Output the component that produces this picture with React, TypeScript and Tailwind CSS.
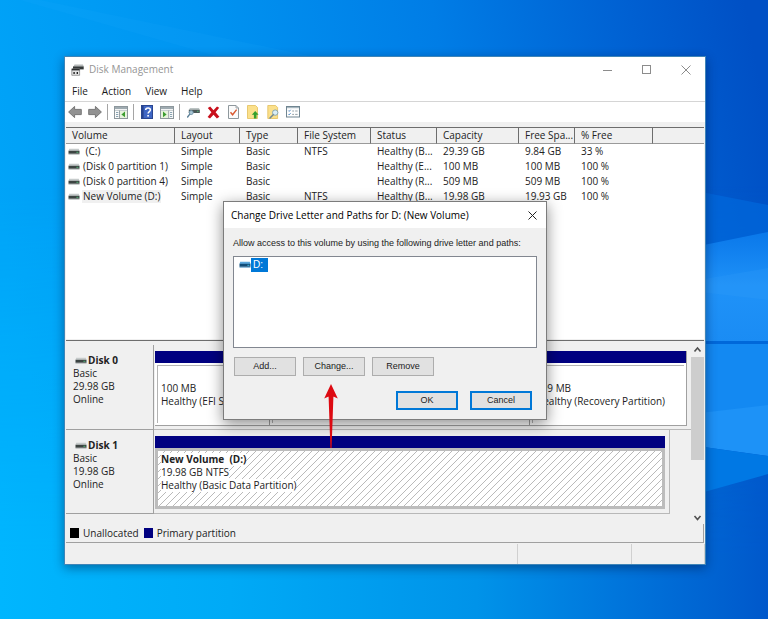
import { useId } from 'react';
import type { ReactNode } from 'react';
import clsx from 'clsx';

interface Volume {
  name: string;
  fs: string;
  status: string;
  capacity: string;
  free: string;
  percent: string;
  selected?: boolean;
}

const columns = [
  { label: 'Volume', width: 'w-[109px]' },
  { label: 'Layout', width: 'w-[65px]' },
  { label: 'Type', width: 'w-[58px]' },
  { label: 'File System', width: 'w-[73px]' },
  { label: 'Status', width: 'w-[66px]' },
  { label: 'Capacity', width: 'w-[82px]' },
  { label: 'Free Spa...', width: 'w-[56px]' },
  { label: '% Free', width: 'w-[78px]' },
  { label: '', width: '' },
];

const volumes: Volume[] = [
  { name: '\u00a0(C:)', fs: 'NTFS', status: 'Healthy (B...', capacity: '29.39 GB', free: '9.84 GB', percent: '33 %' },
  { name: '(Disk 0 partition 1)', fs: '', status: 'Healthy (E...', capacity: '100 MB', free: '100 MB', percent: '100 %' },
  { name: '(Disk 0 partition 4)', fs: '', status: 'Healthy (R...', capacity: '509 MB', free: '509 MB', percent: '100 %' },
  { name: 'New Volume (D:)', fs: 'NTFS', status: 'Healthy (B...', capacity: '19.98 GB', free: '19.93 GB', percent: '100 %', selected: true },
];

function Wallpaper() {
  return (
    <svg className="absolute inset-0 h-full w-full" viewBox="0 0 768 619" preserveAspectRatio="none" aria-hidden="true">
      <defs>
        <linearGradient id="sky" x1="0" y1="0.35" x2="1" y2="0.2">
          <stop offset="0" stopColor="#00a4f8" />
          <stop offset="0.3" stopColor="#0094f1" />
          <stop offset="0.6" stopColor="#007de6" />
          <stop offset="0.85" stopColor="#0060d2" />
          <stop offset="1" stopColor="#0050c5" />
        </linearGradient>
        <linearGradient id="floor" x1="0" y1="0" x2="1" y2="0">
          <stop offset="0" stopColor="#00b6fe" />
          <stop offset="0.3" stopColor="#00aaf6" />
          <stop offset="0.62" stopColor="#0093e9" />
          <stop offset="0.8" stopColor="#0076dc" />
          <stop offset="1" stopColor="#0058cb" />
        </linearGradient>
        <linearGradient id="floorFade" x1="0" y1="0" x2="0" y2="1">
          <stop offset="0.3" stopColor="#000" />
          <stop offset="0.9" stopColor="#fff" />
        </linearGradient>
        <mask id="floorMask">
          <rect width="768" height="619" fill="url(#floorFade)" />
        </mask>
        <linearGradient id="beam" x1="0" y1="0" x2="0" y2="1">
          <stop offset="0" stopColor="#0a78ea" />
          <stop offset="0.5" stopColor="#1f92f8" />
          <stop offset="1" stopColor="#1a8cf4" />
        </linearGradient>
      </defs>
      <rect width="768" height="619" fill="url(#sky)" />
      <rect width="768" height="619" fill="url(#floor)" mask="url(#floorMask)" />
      <path d="M20 0 L230 60 L330 60 L40 0Z" fill="#2bb0ff" opacity="0.1" />
      <path d="M640 180 L768 205 V240 L640 255Z" fill="#0068dc" opacity="0.7" />
      <path d="M640 258 L768 232 V342 H640Z" fill="url(#beam)" />
      <path d="M640 290 L768 268 V300 L640 285Z" fill="#35a0fc" opacity="0.2" />
      <path d="M640 344 H768 V456 L640 438Z" fill="#1d92f7" />
      <path d="M640 344 H768 V405 L640 420Z" fill="#0a80ee" opacity="0.5" />
      <rect x="640" y="341" width="128" height="3" fill="#0068da" />
      <path d="M640 438 L768 456 V474 L640 510Z" fill="#0078e4" />
    </svg>
  );
}

function DriveIcon({ blue = false }: { blue?: boolean }) {
  return (
    <svg width="12" height="8" viewBox="0 0 12 8" className="shrink-0" aria-hidden="true">
      <path d="M1.2 0.8 H10.8 L11.5 3 H0.5Z" fill={blue ? '#5ba7dc' : '#c6cbcb'} />
      <rect x="0.5" y="2.8" width="11" height="3" fill={blue ? '#114c78' : '#3c4442'} />
      <rect x="8.4" y="3.8" width="2" height="1" fill={blue ? '#3cb8e0' : '#4fae72'} />
      <rect x="0.5" y="5.8" width="11" height="0.8" fill={blue ? '#4f93c4' : '#a9afae'} />
    </svg>
  );
}

function AppIcon() {
  return (
    <svg width="13" height="12" viewBox="0 0 13 12" aria-hidden="true">
      <path d="M3.5 0.5 H12 L12.7 2.5 H2.5Z" fill="#b5b9ba" />
      <path d="M2 2.4 H12.7 V5.4 H2Z" fill="#34393a" />
      <path d="M0.8 4.8 H8.6 V11.3 H0.8Z" fill="#e3e3e3" stroke="#7a7a7a" strokeWidth="0.7" />
      <path d="M0.8 4.8 H8.6 V6.4 H0.8Z" fill="#2c2f30" />
      <rect x="2.4" y="8" width="1.4" height="2" fill="#222" />
      <rect x="5.6" y="8" width="1.4" height="2" fill="#222" />
    </svg>
  );
}

function ArrowIcon({ flip = false }: { flip?: boolean }) {
  return (
    <svg width="14" height="14" viewBox="0 0 14 14" className={clsx(flip && 'rotate-180')} aria-hidden="true">
      <path d="M0.6 7 L6.6 1.4 V4.4 H13.3 V9.6 H6.6 V12.6Z" fill="#929292" stroke="#6e6e6e" strokeWidth="0.9" strokeLinejoin="round" />
    </svg>
  );
}

function PaneIcon({ side }: { side: 'left' | 'right' }) {
  return (
    <svg width="14" height="13" viewBox="0 0 14 13" aria-hidden="true">
      <rect x="0.5" y="0.5" width="13" height="12" fill="#fafafa" stroke="#8d979c" />
      <rect x="1" y="1" width="12" height="2" fill="#9fabb1" />
      <path d="M1 4.4 H13" stroke="#b4bcc0" strokeWidth="0.8" />
      {side === 'left' ? (
        <>
          <path d="M5.5 4.5 V12" stroke="#8d979c" strokeWidth="0.9" />
          <path d="M2 6.5 H4.3 M2 8.5 H4.3 M2 10.5 H4.3" stroke="#7b98a8" strokeWidth="0.9" />
          <rect x="6" y="5" width="7" height="7" fill="#e6f3dc" />
          <path d="M11 5.6 V11.2 L7.4 8.4Z" fill="#3c9d2f" />
        </>
      ) : (
        <>
          <path d="M8.7 4.5 V12" stroke="#8d979c" strokeWidth="0.9" />
          <path d="M10 6.5 H12.2 M10 8.5 H12.2 M10 10.5 H12.2" stroke="#7b98a8" strokeWidth="0.9" />
          <rect x="1" y="5" width="7" height="7" fill="#e6f3dc" />
          <path d="M3 5.6 V11.2 L6.6 8.4Z" fill="#3c9d2f" />
        </>
      )}
    </svg>
  );
}

function HelpIcon() {
  return (
    <svg width="12" height="14" viewBox="0 0 12 14" aria-hidden="true">
      <rect x="0.5" y="0.5" width="11" height="13" fill="#3f66c4" stroke="#2a4690" />
      <path d="M1 1 H2.6 V13 H1Z" fill="#27438f" />
      <path d="M4.7 5 C4.7 2.4 9.4 2.4 9.4 5 C9.4 6.6 7.1 6.6 7.1 8.6" fill="none" stroke="#fff" strokeWidth="1.5" />
      <rect x="6.3" y="10" width="1.6" height="1.6" fill="#fff" />
    </svg>
  );
}

function RescanIcon() {
  return (
    <svg width="13" height="11" viewBox="0 0 13 11" aria-hidden="true">
      <path d="M3 1 H12 L12.8 3 H1.8Z" fill="#bcc4c4" />
      <rect x="1.8" y="2.8" width="11" height="3.2" fill="#4c5857" />
      <rect x="10" y="3.8" width="1.6" height="1" fill="#58b27c" />
      <circle cx="4.2" cy="5.6" r="2" fill="#a9c6d4" stroke="#6f93a8" strokeWidth="0.9" />
      <path d="M2.6 7.4 L0.6 10" stroke="#5b7f96" strokeWidth="1.4" strokeLinecap="round" />
    </svg>
  );
}

function DeleteIcon() {
  return (
    <svg width="13" height="13" viewBox="0 0 13 13" aria-hidden="true">
      <path d="M0.8 2 L3.2 0.6 L6.5 4.2 L10 0.6 L12.2 1.8 L8.6 6.3 L12.4 10.8 L9.9 12.5 L6.5 8.7 L3 12.5 L0.6 11 L4.4 6.3Z" fill="#c9101c" />
    </svg>
  );
}

function CheckPageIcon() {
  return (
    <svg width="11" height="14" viewBox="0 0 11 14" aria-hidden="true">
      <path d="M0.5 0.5 H8 L10.5 3 V13.5 H0.5Z" fill="#fbfbfb" stroke="#8f989d" />
      <path d="M8 0.5 V3 H10.5" fill="none" stroke="#8f989d" strokeWidth="0.8" />
      <path d="M2.5 7.2 L4.6 9.8 L8.6 4.6" fill="none" stroke="#d9582f" strokeWidth="1.4" />
    </svg>
  );
}

function FolderUpIcon() {
  return (
    <svg width="12" height="14" viewBox="0 0 12 14" aria-hidden="true">
      <path d="M0.5 0.5 H8.5 L10.5 2.5 V13.5 H0.5Z" fill="#fbe08b" stroke="#e2bf5c" strokeWidth="0.8" />
      <path d="M8.2 6 L11.6 9.8 H9.5 V13.4 H6.9 V9.8 H4.8Z" fill="#35a02c" />
    </svg>
  );
}

function FolderFindIcon() {
  return (
    <svg width="12" height="14" viewBox="0 0 12 14" aria-hidden="true">
      <path d="M0.8 0.5 H8.6 L10.6 2.5 V13.5 H0.8Z" fill="#fbe08b" stroke="#e2bf5c" strokeWidth="0.8" />
      <circle cx="8.2" cy="7.6" r="2.7" fill="#d9edf5" stroke="#7fa0af" strokeWidth="0.9" />
      <path d="M6.2 9.7 L3 13" stroke="#6f8894" strokeWidth="1.5" strokeLinecap="round" />
    </svg>
  );
}

function PropertiesIcon() {
  return (
    <svg width="14" height="12" viewBox="0 0 14 12" aria-hidden="true">
      <rect x="0.5" y="0.5" width="13" height="10.5" fill="#fdfdfd" stroke="#708591" />
      <rect x="1" y="1" width="12" height="1.2" fill="#a9b8c0" />
      <path d="M2.4 4.6 L3.2 5.4 L4.6 3.8 M2.4 8 L3.2 8.8 L4.6 7.2" fill="none" stroke="#3f7fc0" strokeWidth="0.9" />
      <path d="M6.2 5 H8 M9.2 5 H11.6 M6.2 8.4 H8 M9.2 8.4 H11.6" stroke="#8a979e" strokeWidth="0.9" />
    </svg>
  );
}

function ToolButton({ label, children }: { label: string; children: ReactNode }) {
  return (
    <button type="button" aria-label={label} className="flex h-[18px] w-5 items-center justify-center">
      {children}
    </button>
  );
}

function ToolSeparator() {
  return <span className="mr-[3px] ml-[2px] h-4 w-px bg-[#a5a5a5]" />;
}

function TitleBar() {
  return (
    <header className="flex h-[25px] items-center bg-white pl-[6px] text-[#959595]">
      <AppIcon />
      <h1 className="ml-[5px] flex-1 text-[10px]">Disk Management</h1>
      <button type="button" aria-label="Minimize" className="flex h-full w-[39px] items-center justify-center">
        <svg width="10" height="10" viewBox="0 0 10 10" fill="none" stroke="#8c8c8c">
          <path d="M0 5.5 H9" />
        </svg>
      </button>
      <button type="button" aria-label="Maximize" className="flex h-full w-[39px] items-center justify-center">
        <svg width="10" height="10" viewBox="0 0 10 10" fill="none" stroke="#8c8c8c">
          <rect x="0.5" y="0.5" width="8" height="8" />
        </svg>
      </button>
      <button type="button" aria-label="Close" className="flex h-full w-[39px] items-center justify-center">
        <svg width="10" height="10" viewBox="0 0 10 10" fill="none" stroke="#8c8c8c">
          <path d="M0.5 0.5 L9.5 9.5 M9.5 0.5 L0.5 9.5" />
        </svg>
      </button>
    </header>
  );
}

function MenuBar() {
  return (
    <nav className="flex h-5 items-center gap-[14px] border-b border-[#d5d5d5] bg-white pl-[7px] text-[10px] text-[#1a1a1a]">
      {['File', 'Action', 'View', 'Help'].map((item) => (
        <button key={item} type="button">
          {item}
        </button>
      ))}
    </nav>
  );
}

function Toolbar() {
  return (
    <div className="flex h-5 items-center bg-white">
      <ToolButton label="Back"><ArrowIcon /></ToolButton>
      <ToolButton label="Forward"><ArrowIcon flip /></ToolButton>
      <ToolSeparator />
      <ToolButton label="Show console tree"><PaneIcon side="left" /></ToolButton>
      <ToolSeparator />
      <ToolButton label="Help"><HelpIcon /></ToolButton>
      <ToolButton label="Show action pane"><PaneIcon side="right" /></ToolButton>
      <ToolSeparator />
      <ToolButton label="Rescan"><RescanIcon /></ToolButton>
      <ToolButton label="Delete"><DeleteIcon /></ToolButton>
      <ToolButton label="Check"><CheckPageIcon /></ToolButton>
      <ToolButton label="Up"><FolderUpIcon /></ToolButton>
      <ToolButton label="Find"><FolderFindIcon /></ToolButton>
      <ToolButton label="Properties"><PropertiesIcon /></ToolButton>
    </div>
  );
}

function VolumeTable() {
  return (
    <div className="flex-1 overflow-hidden border-t border-[#6d6d6d] bg-white">
      <table className="w-full table-fixed border-separate border-spacing-0 text-left text-[10px] whitespace-nowrap text-[#222]">
        <thead>
          <tr className="h-4 bg-[#f0f0f0] leading-[15px]">
            {columns.map((col, i) => (
              <th
                key={i}
                scope="col"
                className={clsx(
                  'border-b border-[#9a9a9a] p-0 pl-[6px] font-normal',
                  col.width,
                  col.label && 'border-r border-r-[#6d6d6d]',
                )}
              >
                {col.label}
              </th>
            ))}
          </tr>
        </thead>
        <tbody>
          {volumes.map((v) => (
            <tr key={v.name} className="h-[15px] leading-[15px]">
              <td className="p-0 pl-[2px]">
                <div className="flex items-center gap-[2px]">
                  <DriveIcon />
                  <span className={clsx('px-px leading-[13px]', v.selected && 'bg-[#f0f0f0]')}>{v.name}</span>
                </div>
              </td>
              <td className="p-0 pl-[6px]">Simple</td>
              <td className="p-0 pl-[6px]">Basic</td>
              <td className="p-0 pl-[6px]">{v.fs}</td>
              <td className="p-0 pl-[6px]">{v.status}</td>
              <td className="p-0 pl-[6px]">{v.capacity}</td>
              <td className="p-0 pl-[6px]">{v.free}</td>
              <td className="p-0 pl-[6px]">{v.percent}</td>
              <td className="p-0" />
            </tr>
          ))}
        </tbody>
      </table>
    </div>
  );
}

function DiskLabel({ name, size }: { name: string; size: string }) {
  return (
    <div className="w-[88px] shrink-0 border-r border-b border-[#a0a0a0] pt-[9px] pl-[7px] leading-[13px]">
      <div className="flex items-center gap-px pl-[2px]">
        <DriveIcon />
        <h2 className="font-bold">{name}</h2>
      </div>
      <p>Basic</p>
      <p>{size}</p>
      <p>Online</p>
    </div>
  );
}

function Partition({ className, children }: { className?: string; children?: ReactNode }) {
  return (
    <div className={clsx('flex min-w-0 flex-col border-r border-[#a0a0a0]', className)}>
      <div className="h-3 bg-[#000080]" />
      <div className="flex flex-1 flex-col border-b border-[#a0a0a0] bg-white p-[2px]">
        <div className="flex flex-1 flex-col justify-center border-t border-l border-[#b4b4b4] pl-[3px] leading-[13px]">
          {children}
        </div>
      </div>
    </div>
  );
}

function Hatch() {
  const id = useId();
  return (
    <svg className="absolute inset-0 h-full w-full" aria-hidden="true">
      <defs>
        <pattern id={id} width="7" height="7" patternUnits="userSpaceOnUse">
          <path d="M-1 8 L8 -1 M-1 1 L1 -1 M6 8 L8 6" stroke="#a8a8a8" strokeWidth="0.8" />
        </pattern>
      </defs>
      <rect width="100%" height="100%" fill={`url(#${id})`} />
    </svg>
  );
}

function DiskPane() {
  return (
    <div className="flex border-t border-[#6d6d6d] pt-1 text-[10px] text-[#222]">
      <div className="min-w-0 flex-1">
        <section className="flex h-[85px]">
          <DiskLabel name="Disk 0" size="29.98 GB" />
          <div className="flex min-w-0 flex-1 border-b border-[#b8b8b8] pt-[6px] pr-1 pb-[3px] pl-px">
            <Partition className="flex-[115]">
              <p>100 MB</p>
              <p className="truncate">Healthy (EFI System Partition)</p>
            </Partition>
            <Partition className="flex-[260]" />
            <Partition className="flex-[157]">
              <p>509 MB</p>
              <p className="whitespace-nowrap">Healthy (Recovery Partition)</p>
            </Partition>
          </div>
        </section>
        <section className="flex h-[84px]">
          <DiskLabel name="Disk 1" size="19.98 GB" />
          <div className="mr-[21px] flex min-w-0 flex-1 flex-col border-r border-b border-[#b8b8b8] pt-[6px] pr-1 pb-1 pl-px">
            <div className="h-3 bg-[#000080]" />
            <div className="relative flex-1 border-[3px] border-[#bcbcbc] bg-white">
              <Hatch />
              <div className="relative flex flex-col items-start pt-[2px] pl-[3px] leading-[13px]">
                <h3 className="bg-white font-bold whitespace-pre">{'New Volume  (D:)'}</h3>
                <p className="bg-white">19.98 GB NTFS</p>
                <p className="bg-white">Healthy (Basic Data Partition)</p>
              </div>
            </div>
          </div>
        </section>
        <div className="h-[10px]" />
      </div>
      <div className="flex w-[13px] flex-col items-center">
        <svg width="9" height="9" viewBox="0 0 9 9" fill="none" stroke="#505050" strokeWidth="1.6" aria-hidden="true">
          <path d="M1.5 6.5 L4.5 3 L7.5 6.5" />
        </svg>
        <div className="mt-[3px] h-[103px] w-full bg-[#cdcdcd]" />
        <svg className="mt-auto mb-[2px]" width="9" height="9" viewBox="0 0 9 9" fill="none" stroke="#505050" strokeWidth="1.6" aria-hidden="true">
          <path d="M1.5 3 L4.5 6.5 L7.5 3" />
        </svg>
      </div>
    </div>
  );
}

function Legend() {
  return (
    <div className="flex h-[19px] items-center border-r border-b border-[#a0a0a0] pl-1 text-[10px] text-[#222]">
      <span className="h-[10px] w-[9px] bg-black" />
      <span className="ml-1">Unallocated</span>
      <span className="ml-[5px] h-[10px] w-[9px] bg-[#000080]" />
      <span className="ml-1">Primary partition</span>
    </div>
  );
}

function DialogButton({ children, focused = false }: { children: ReactNode; focused?: boolean }) {
  return (
    <button
      type="button"
      className={clsx(
        'h-[19px] w-[62px] bg-[#e1e1e1]',
        focused ? 'border-2 border-[#0078d7]' : 'border border-[#adadad]',
      )}
    >
      {children}
    </button>
  );
}

// Red pointer that leads up to the Change button
function Pointer() {
  return (
    <svg className="absolute top-full left-1/2 mt-2 -ml-[10px]" width="14" height="64" viewBox="0 0 14 64" aria-hidden="true">
      <path d="M7 0 L13.8 14.5 C11.5 13.2 10 12.7 9.4 12.7 L7.6 64 H6.4 L4.6 12.7 C4 12.7 2.5 13.2 0.2 14.5Z" fill="#dd0a12" />
    </svg>
  );
}

function DriveLetterDialog() {
  return (
    <div
      role="dialog"
      aria-labelledby="dialog-title"
      className="w-[324px] border border-[#7c7c7c] bg-[#f0f0f0] shadow-[0_4px_14px_rgba(0,0,0,0.45)]"
    >
      <div className="flex h-[26px] items-center bg-white pl-[7px]">
        <h2 id="dialog-title" className="flex-1 text-[10px] text-black">
          Change Drive Letter and Paths for D: (New Volume)
        </h2>
        <button type="button" aria-label="Close" className="flex h-full w-[27px] items-center justify-center">
          <svg width="9" height="9" viewBox="0 0 9 9" fill="none" stroke="#222">
            <path d="M0.5 0.5 L8.5 8.5 M8.5 0.5 L0.5 8.5" />
          </svg>
        </button>
      </div>
      <div className="p-[9px] font-['Liberation_Sans',Arial,sans-serif] text-[9px] text-[#222]">
        <p id="paths-label" className="leading-[13px]">
          Allow access to this volume by using the following drive letter and paths:
        </p>
        <ul role="listbox" aria-labelledby="paths-label" className="mt-[6px] h-[92px] border border-[#828790] bg-white pt-px pl-[5px]">
          <li role="option" aria-selected="true" className="flex items-center">
            <DriveIcon blue />
            <span className="bg-[#0078d7] px-[2px] text-[10px] leading-[14px] text-white">D:&nbsp;</span>
          </li>
        </ul>
        <div className="mt-[9px] flex gap-[7px] pl-px">
          <DialogButton>Add...</DialogButton>
          <div className="relative">
            <DialogButton>Change...</DialogButton>
            <Pointer />
          </div>
          <DialogButton>Remove</DialogButton>
        </div>
        <div className="mt-[15px] flex justify-end gap-3 pr-[5px]">
          <DialogButton focused>OK</DialogButton>
          <DialogButton focused>Cancel</DialogButton>
        </div>
      </div>
    </div>
  );
}

export default function App() {
  return (
    <div className="relative flex min-h-screen overflow-hidden bg-[#0090f0] pt-14 pr-[62px] pb-[54px] pl-16 font-['Open_Sans','Noto_Sans',sans-serif]">
      <Wallpaper />
      <main className="relative flex min-w-0 flex-1 flex-col border border-[#3f85b8] bg-[#f0f0f0] shadow-[0_3px_10px_rgba(0,20,60,0.45)]">
        <TitleBar />
        <MenuBar />
        <Toolbar />
        <div className="mt-[5px] flex flex-1 flex-col px-px">
          <VolumeTable />
          <div className="mt-px">
            <DiskPane />
          </div>
          <Legend />
        </div>
        <footer className="mt-px flex h-5 justify-end">
          <span className="w-[114px] border-l border-[#d0d0d0]" />
          <span className="w-[74px] border-x border-[#d0d0d0]" />
        </footer>
        <div className="absolute inset-0 flex items-center justify-center">
          <DriveLetterDialog />
        </div>
      </main>
    </div>
  );
}
